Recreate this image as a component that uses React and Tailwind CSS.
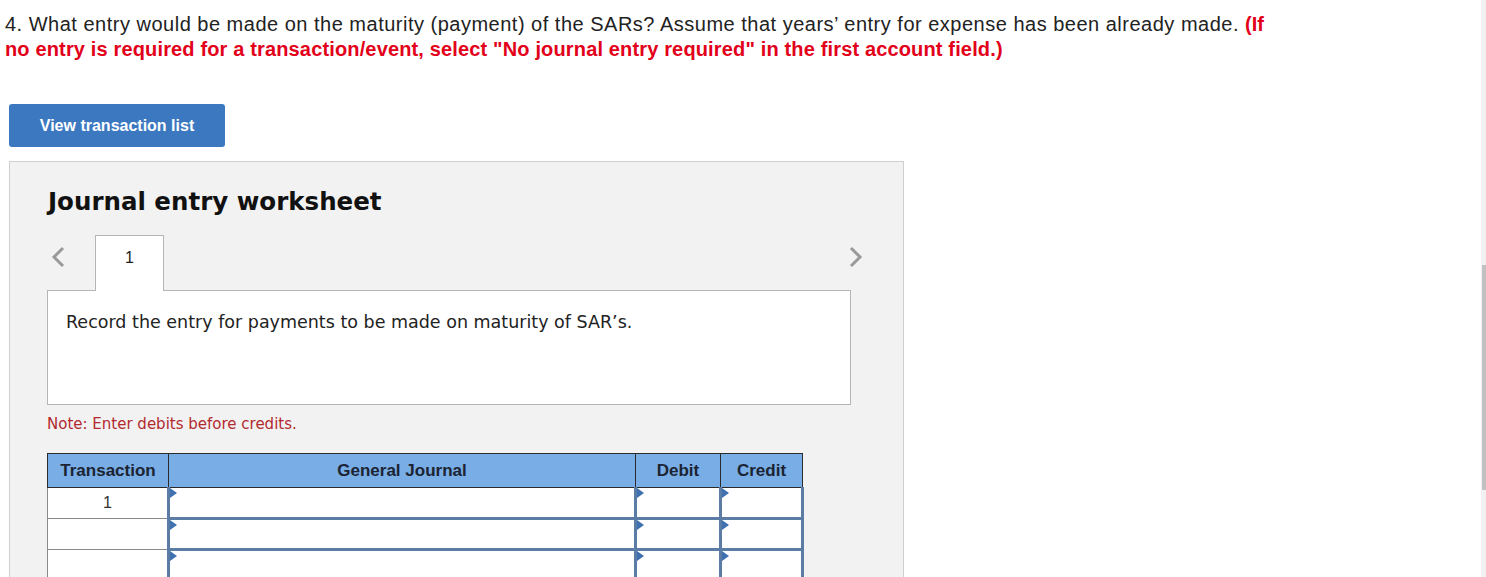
import React from 'react';

const rows = ['1', '', ''];

const InputCell = ({ first }) => (
  <td
    className={`relative h-[31px] bg-white border-[3px] border-[#5b7ca4] p-0 ${first ? 'border-t' : ''}`}
  >
    <span className="absolute left-0 top-0 w-0 h-0 border-t-[5px] border-b-[5px] border-l-[7px] border-t-transparent border-b-transparent border-l-[#3f71b0]" />
  </td>
);

export default function App() {
  return (
    <div className="relative min-h-[577px] bg-white overflow-hidden" style={{ fontFamily: '"Liberation Sans", Arial, sans-serif' }}>
      {/* question */}
      <div className="pt-[12px] pl-[5px] text-[20px] leading-[25px] text-[#222]">
        <span className="tracking-[0.5px]">
          4. What entry would be made on the maturity (payment) of the SARs? Assume that years’ entry for expense has been already made.{' '}
        </span>
        <span className="font-bold text-[#e2001a]">(If</span>
        <br />
        <span className="font-bold text-[#e2001a] tracking-[0.15px]">
          no entry is required for a transaction/event, select "No journal entry required" in the first account field.)
        </span>
      </div>

      <div className="pl-[9px] mt-[42px]">
        <button className="w-[216px] h-[43px] rounded-[3px] bg-[#3b78c0] text-white text-[16px] font-bold">
          View transaction list
        </button>
      </div>

      {/* worksheet */}
      <div className="ml-[9px] mt-[14px] w-[895px] h-[430px] bg-[#f2f2f2] border border-[#cfcfcf] pl-[37px] pt-[24px]" style={{ fontFamily: '"DejaVu Sans", Verdana, sans-serif' }}>
        <h2 className="text-[24.5px] leading-[32px] font-bold text-[#111] pl-px">Journal entry worksheet</h2>

        <div className="mt-[17px] w-[804px]">
          <div className="flex items-start h-[55px]">
            <div className="w-[48px] pt-[11px] pl-[4px]">
              <svg width="14" height="22" viewBox="0 0 14 22" fill="none">
                <path d="M12 2 L3 11 L12 20" stroke="#9a9a9a" strokeWidth="3" />
              </svg>
            </div>
            <div className="w-[69px] h-[56px] relative z-10 bg-white border border-b-0 border-[#b5b5b5] flex items-start justify-center pt-[10px] text-[16px] text-[#222]" style={{ fontFamily: '"Liberation Sans", Arial, sans-serif' }}>
              1
            </div>
            <div className="flex-1 flex justify-end pt-[11px]">
              <svg width="14" height="22" viewBox="0 0 14 22" fill="none" className="mr-[-12px]">
                <path d="M2 2 L11 11 L2 20" stroke="#9a9a9a" strokeWidth="3" />
              </svg>
            </div>
          </div>
          <div className="h-[115px] bg-white border border-[#b5b5b5] pl-[18px] pt-[18px] text-[17.5px] text-[#222]">
            Record the entry for payments to be made on maturity of SAR’s.
          </div>
        </div>

        <p className="mt-[8px] text-[15px] leading-[22px] text-[#b22a2e]">Note: Enter debits before credits.</p>

        <table className="mt-[18px] border-collapse table-fixed w-[755px]" style={{ fontFamily: '"Liberation Sans", Arial, sans-serif' }}>
          <colgroup>
            <col className="w-[121px]" />
            <col className="w-[467px]" />
            <col className="w-[85px]" />
            <col className="w-[82px]" />
          </colgroup>
          <thead>
            <tr className="h-[34px] bg-[#78ade5] text-[17px] font-bold text-[#1c2433]">
              <th className="border border-[#2b2b2b] font-bold">Transaction</th>
              <th className="border border-[#2b2b2b] font-bold">General Journal</th>
              <th className="border border-[#2b2b2b] font-bold">Debit</th>
              <th className="border border-[#2b2b2b] font-bold">Credit</th>
            </tr>
          </thead>
          <tbody>
            {rows.map((r, i) => (
              <tr key={i}>
                <td className="h-[31px] bg-white border border-[#8a8a8a] text-center text-[16px] text-[#333] p-0">{r}</td>
                <InputCell first={i === 0} />
                <InputCell first={i === 0} />
                <InputCell first={i === 0} />
              </tr>
            ))}
          </tbody>
        </table>
      </div>

      {/* scrollbar */}
      <div className="absolute right-0 top-0 w-[5px] h-full bg-[#f1f1f1]">
        <div className="mt-[265px] mx-auto w-[4px] h-[225px] bg-[#c1c1c1]" />
      </div>
    </div>
  );
}
